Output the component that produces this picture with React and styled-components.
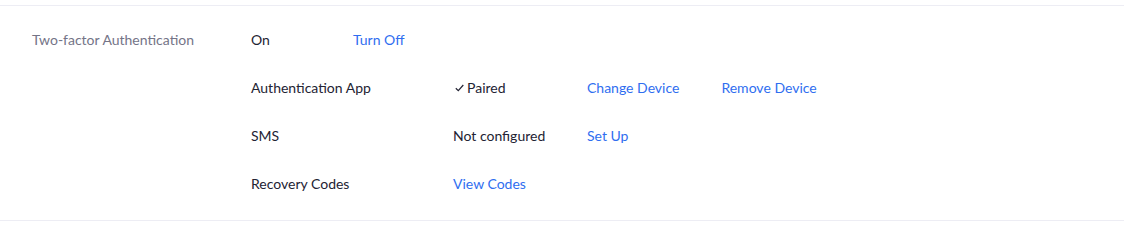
import React from "react";
import styled, { createGlobalStyle } from "styled-components";

const Global = createGlobalStyle`
  html, body { margin: 0; padding: 0; background: #fff; }
  body { font-family: Lato, "Open Sans", sans-serif; font-size: 14px; color: #232333; }
`;

const Section = styled.section`
  margin-top: 5px;
  border-top: 1px solid #ededf4;
  border-bottom: 1px solid #ededf4;
  padding: 9px 0 13px;
  display: flex;
`;

const Label = styled.div`
  width: 219px;
  padding-left: 32px;
  height: 48px;
  display: flex;
  align-items: center;
  color: #747487;
  flex-shrink: 0;
`;

const Content = styled.div`
  display: flex;
  flex-direction: column;
`;

const Row = styled.div`
  height: 48px;
  display: flex;
  align-items: center;
`;

const Cell = styled.div`
  width: ${(p) => p.$w}px;
  flex-shrink: 0;
  display: flex;
  align-items: center;
`;

const Link = styled.a`
  color: #2f6ef0;
  text-decoration: none;
  cursor: pointer;
  margin-right: ${(p) => p.$mr || 0}px;
`;

const Check = styled.svg`
  width: 9px;
  height: 8px;
  margin: 2px 3px 0 2px;
`;

export default function App() {
  return (
    <>
      <Global />
      <Section>
        <Label>Two-factor Authentication</Label>
        <Content>
          <Row>
            <Cell $w={102}>On</Cell>
            <Link>Turn Off</Link>
          </Row>
          <Row>
            <Cell $w={202}>Authentication App</Cell>
            <Cell $w={134}>
              <Check viewBox="0 0 9 8">
                <path d="M0.8 4.2 L3.3 6.6 L8.3 1" fill="none" stroke="#232333" strokeWidth="1.2" />
              </Check>
              Paired
            </Cell>
            <Link $mr={42}>Change Device</Link>
            <Link>Remove Device</Link>
          </Row>
          <Row>
            <Cell $w={202}>SMS</Cell>
            <Cell $w={134}>Not configured</Cell>
            <Link>Set Up</Link>
          </Row>
          <Row>
            <Cell $w={202}>Recovery Codes</Cell>
            <Link>View Codes</Link>
          </Row>
        </Content>
      </Section>
    </>
  );
}
